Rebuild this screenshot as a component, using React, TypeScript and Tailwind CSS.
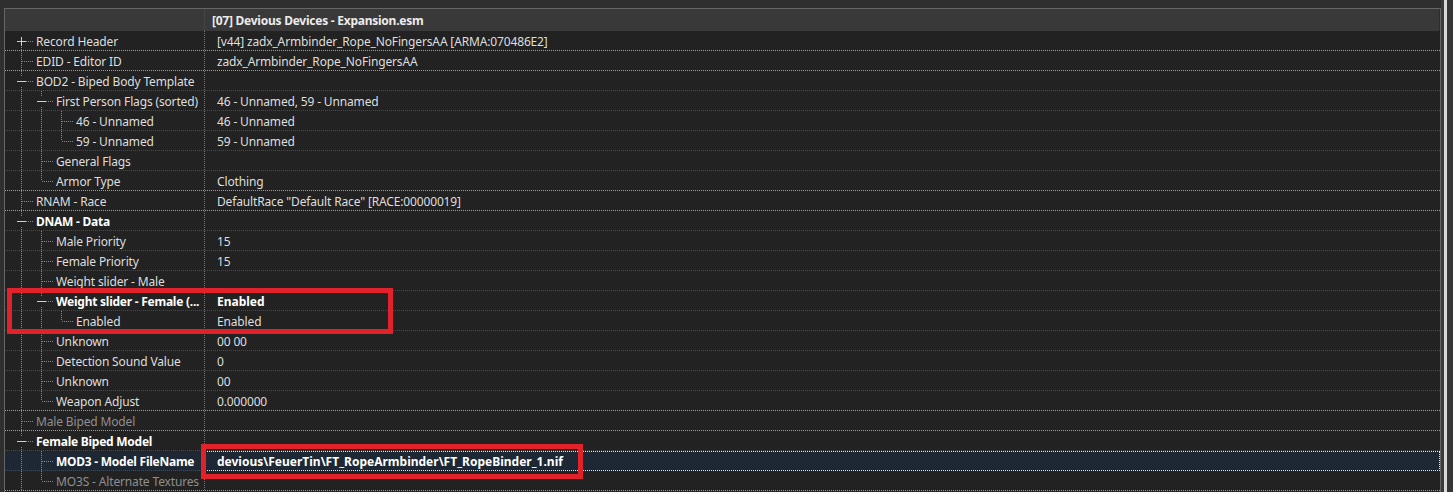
import React from 'react';

// Record view of an xEdit-like tree grid (dark theme)

type Row = {
  level: number;
  label: string;
  value?: string;
  exp?: '+' | '-';
  bold?: boolean;
  boldValue?: boolean;
  dim?: boolean;
  selected?: boolean;
};

const rows: Row[] = [
  { level: 0, label: 'Record Header', value: '[v44] zadx_Armbinder_Rope_NoFingersAA [ARMA:070486E2]', exp: '+' },
  { level: 0, label: 'EDID - Editor ID', value: 'zadx_Armbinder_Rope_NoFingersAA' },
  { level: 0, label: 'BOD2 - Biped Body Template', exp: '-' },
  { level: 1, label: 'First Person Flags (sorted)', value: '46 - Unnamed, 59 - Unnamed', exp: '-' },
  { level: 2, label: '46 - Unnamed', value: '46 - Unnamed' },
  { level: 2, label: '59 - Unnamed', value: '59 - Unnamed' },
  { level: 1, label: 'General Flags' },
  { level: 1, label: 'Armor Type', value: 'Clothing' },
  { level: 0, label: 'RNAM - Race', value: 'DefaultRace "Default Race" [RACE:00000019]' },
  { level: 0, label: 'DNAM - Data', exp: '-', bold: true },
  { level: 1, label: 'Male Priority', value: '15' },
  { level: 1, label: 'Female Priority', value: '15' },
  { level: 1, label: 'Weight slider - Male' },
  { level: 1, label: 'Weight slider - Female (...', value: 'Enabled', exp: '-', bold: true, boldValue: true },
  { level: 2, label: 'Enabled', value: 'Enabled' },
  { level: 1, label: 'Unknown', value: '00 00' },
  { level: 1, label: 'Detection Sound Value', value: '0' },
  { level: 1, label: 'Unknown', value: '00' },
  { level: 1, label: 'Weapon Adjust', value: '0.000000' },
  { level: 0, label: 'Male Biped Model', dim: true },
  { level: 0, label: 'Female Biped Model', exp: '-', bold: true },
  {
    level: 1,
    label: 'MOD3 - Model FileName',
    value: 'devious\\FeuerTin\\FT_RopeArmbinder\\FT_RopeBinder_1.nif',
    bold: true,
    boldValue: true,
    selected: true,
  },
  { level: 1, label: 'MO3S - Alternate Textures', dim: true },
];

// does the branch at level k still go on below row i?
function continues(i: number, k: number): boolean {
  for (let j = i + 1; j < rows.length; j++) {
    if (rows[j].level < k) return false;
    if (rows[j].level === k) return true;
  }
  return k === 0;
}

const DOT = '#8a8a8a';

function Guide({ on }: { on: boolean }) {
  return (
    <svg width="20" height="20" className="shrink-0 self-start overflow-visible">
      {on && <line x1="10.5" y1="0" x2="10.5" y2="20" stroke={DOT} strokeDasharray="1 1" />}
    </svg>
  );
}

function Connector({ first, last, exp }: { first: boolean; last: boolean; exp?: '+' | '-' }) {
  const gap = !!exp;
  return (
    <svg width="20" height="20" className="shrink-0 self-start overflow-visible">
      {!first && <line x1="10.5" y1="0" x2="10.5" y2={gap ? 5 : 10} stroke={DOT} strokeDasharray="1 1" />}
      {!last && <line x1="10.5" y1={gap ? 16 : 10} x2="10.5" y2="20" stroke={DOT} strokeDasharray="1 1" />}
      <line x1={gap ? 15 : 11} y1="10.5" x2="23" y2="10.5" stroke={DOT} strokeDasharray="1 1" />
      {exp && <line x1="6" y1="10.5" x2="15" y2="10.5" stroke="#cfcfcf" />}
      {exp === '+' && <line x1="10.5" y1="6" x2="10.5" y2="15" stroke="#cfcfcf" />}
    </svg>
  );
}

function TreeRow({ row, index }: { row: Row; index: number }) {
  const next = rows[index + 1];
  const bright = !next || next.level === 0;
  const guides = [];
  for (let k = 0; k < row.level; k++) guides.push(<Guide key={k} on={continues(index, k)} />);

  const labelColor = row.dim
    ? 'text-[#8f8f8f] tracking-[-0.15px]'
    : row.bold
      ? 'text-white font-bold tracking-[-0.25px]'
      : 'text-[#dedede] tracking-[-0.15px]';

  return (
    <div
      className={`flex h-5 shrink-0 border-b border-dotted ${bright ? 'border-[#9c9c9c]' : 'border-[#4a4a4a]'} ${
        row.selected ? 'bg-[#1d2834]' : ''
      }`}
    >
      <div className="flex w-[200px] shrink-0 items-center overflow-hidden border-r border-dotted border-[#767676] pl-[6px]">
        {guides}
        <Connector first={index === 0} last={!continues(index, row.level)} exp={row.exp} />
        <span className={`ml-[5px] pt-[2px] leading-[16px] whitespace-nowrap ${labelColor}`}>{row.label}</span>
      </div>
      {row.selected ? (
        <div className="mb-[-1px] flex flex-1 items-center border border-dotted border-[#e6e6e6] pl-[11px]">
          <span className="pt-[2px] leading-[16px] font-bold whitespace-nowrap text-white">{row.value}</span>
        </div>
      ) : (
        <div className="flex flex-1 items-center pl-[12px]">
          <span
            className={`pt-[2px] leading-[16px] whitespace-nowrap ${
              row.boldValue ? 'font-bold text-white' : 'tracking-[-0.15px] text-[#dedede]'
            }`}
          >
            {row.value}
          </span>
        </div>
      )}
    </div>
  );
}

export default function App() {
  return (
    <div
      className="relative flex h-[492px] w-[1453px] overflow-hidden bg-[#2f2f2f] text-[12px] leading-none"
      style={{ fontFamily: '"Noto Sans", "Open Sans", sans-serif' }}
    >
      <div className="w-[4px] shrink-0" />

      {/* grid panel */}
      <div className="mt-[8px] flex w-[1437px] shrink-0 flex-col border-t border-r border-l border-[#666] bg-[#222]">
        <div className="flex h-[22px] shrink-0 bg-[#393939]">
          <div className="w-[200px] shrink-0 border-r border-[#444]" />
          <div className="flex flex-1 items-center border-r border-[#2c2c2c] pl-[7px]">
            <span className="pt-[1px] font-bold tracking-[-0.25px] text-[#ececec]">
              [07] Devious Devices - Expansion.esm
            </span>
          </div>
        </div>
        {rows.map((row, i) => (
          <TreeRow key={i} row={row} index={i} />
        ))}
      </div>

      {/* scrollbar edge */}
      <div className="flex w-[12px] shrink-0">
        <div className="w-[3px] bg-[#3b3b3b]" />
        <div className="w-[3px] bg-[#d9d9d9]" />
        <div className="flex-1 bg-[#363636]" />
      </div>

      {/* annotation boxes */}
      <div className="absolute top-[288px] left-[7px] h-[46px] w-[386px] border-[5px] border-[#e2222b]" />
      <div className="absolute top-[444px] left-[201px] h-[35px] w-[382px] border-[5px] border-[#e2222b]" />
    </div>
  );
}
